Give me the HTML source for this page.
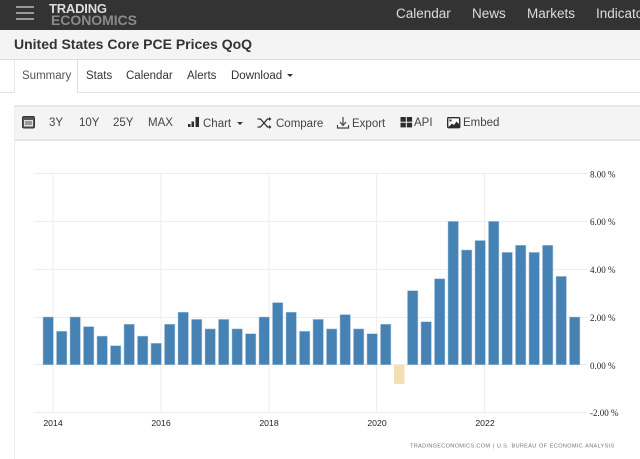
<!DOCTYPE html>
<html><head><meta charset="utf-8">
<style>
html,body{margin:0;padding:0;background:#fff}
body{width:640px;height:459px;overflow:hidden;position:relative;font-family:"Liberation Sans",sans-serif}
.a{position:absolute;white-space:nowrap}
svg{position:absolute;left:0;top:0}
</style></head><body>
<div class="a" style="left:0;top:0;width:640px;height:30px;background:#333"></div>
<div class="a" style="left:16px;top:6px;width:18px;height:1.500px;background:#999"></div>
<div class="a" style="left:16px;top:12px;width:18px;height:1.500px;background:#999"></div>
<div class="a" style="left:16px;top:18px;width:18px;height:1.500px;background:#999"></div>
<div class="a" style="left:49px;top:2px;font-size:13px;font-weight:bold;color:#ddd;line-height:14px;letter-spacing:-.2px">TRADING</div>
<div class="a" style="left:51px;top:13px;font-size:14px;font-weight:bold;color:#8a8a8a;line-height:14px;letter-spacing:-.05px">ECONOMICS</div>
<div class="a" style="left:396px;top:6px;font-size:13.500px;color:#ddd;line-height:16px">Calendar</div>
<div class="a" style="left:472px;top:6px;font-size:13.500px;color:#ddd;line-height:16px">News</div>
<div class="a" style="left:527px;top:6px;font-size:13.500px;color:#ddd;line-height:16px">Markets</div>
<div class="a" style="left:596px;top:6px;font-size:13.500px;color:#ddd;line-height:16px">Indicators</div>

<div class="a" style="left:0;top:30px;width:640px;height:29px;background:#f4f4f4;border-bottom:1px solid #ddd"></div>
<div class="a" style="left:14px;top:36px;font-size:14px;font-weight:bold;color:#333;line-height:17px">United States Core PCE Prices QoQ</div>

<div class="a" style="left:0;top:92px;width:640px;height:1px;background:#e2e2e2"></div>
<div class="a" style="left:14px;top:60px;width:62px;height:33px;background:#fff;border-left:1px solid #e6e6e6;border-right:1px solid #ddd"></div>
<div class="a" style="left:22px;top:69px;font-size:11.500px;color:#555;line-height:15px">Summary</div>
<div class="a" style="left:86px;top:69px;font-size:11.500px;color:#333;line-height:15px">Stats</div>
<div class="a" style="left:126px;top:69px;font-size:11.500px;color:#333;line-height:15px">Calendar</div>
<div class="a" style="left:187px;top:69px;font-size:11.500px;color:#333;line-height:15px">Alerts</div>
<div class="a" style="left:231px;top:69px;font-size:11.500px;color:#333;line-height:15px">Download</div>
<div class="a" style="left:287px;top:74px;width:0;height:0;border-left:3px solid transparent;border-right:3px solid transparent;border-top:3px solid #333"></div>

<div class="a" style="left:14px;top:105px;width:626px;background:#f4f4f4;border-top:2px solid #e6e6e6;border-bottom:2px solid #e6e6e6;box-sizing:border-box;height:36px"></div>
<div class="a" style="left:14px;top:105px;width:1px;height:354px;background:#eee"></div>

<div class="a" style="left:49px;top:116px;font-size:11.500px;color:#444;line-height:15px">3Y</div>
<div class="a" style="left:79px;top:116px;font-size:11.500px;color:#444;line-height:15px">10Y</div>
<div class="a" style="left:113px;top:116px;font-size:11.500px;color:#444;line-height:15px">25Y</div>
<div class="a" style="left:148px;top:116px;font-size:11.500px;color:#444;line-height:15px">MAX</div>
<div class="a" style="left:203px;top:117px;font-size:11.500px;color:#444;line-height:15px">Chart</div>
<div class="a" style="left:237px;top:122px;width:0;height:0;border-left:3.500px solid transparent;border-right:3.500px solid transparent;border-top:3.500px solid #333"></div>
<div class="a" style="left:276px;top:117px;font-size:11.500px;color:#444;line-height:15px">Compare</div>
<div class="a" style="left:352px;top:117px;font-size:11.500px;color:#444;line-height:15px">Export</div>
<div class="a" style="left:414px;top:116px;font-size:11.500px;color:#444;line-height:15px">API</div>
<div class="a" style="left:463px;top:116px;font-size:11.500px;color:#444;line-height:15px">Embed</div>

<svg width="640" height="459" viewBox="0 0 640 459">
<!-- toolbar icons -->
<rect x="22.500" y="116.500" width="12" height="11.500" rx="1.500" fill="#555" stroke="#333"/>
<rect x="24" y="120" width="9" height="6.500" fill="#ddd"/>
<path d="M25 122h7M25 124h7" stroke="#555"/>
<path d="M188 127v-3h2.500v3zM191.500 127v-5.500h2.500v5.500zM195.500 127v-10h3.500v10z" fill="#2c2c2c"/>
<path d="M257.500 119h3l7 8h2.500M257.500 127h3l7-8h2.500" fill="none" stroke="#333" stroke-width="1.300"/>
<path d="M269 117l2.500 2-2.500 2zM269 125l2.500 2-2.500 2z" fill="#333"/>
<path d="M343 117v8M340 122l3 3.500 3-3.500M337.500 125v3h11v-3" fill="none" stroke="#444" stroke-width="1.200"/>
<g fill="#2c2c2c"><rect x="400.500" y="117" width="5.300" height="4.700"/><rect x="406.800" y="117" width="5.300" height="4.700"/><rect x="400.500" y="122.700" width="5.300" height="4.700"/><rect x="406.800" y="122.700" width="5.300" height="4.700"/></g>
<rect x="447.700" y="117.700" width="12" height="10" rx="1" fill="#fff" stroke="#2c2c2c" stroke-width="1.400"/>
<path d="M448 127.500l4-4 2 1.500 2.500-3.500 3 3v3z" fill="#2c2c2c"/><rect x="449.500" y="119.500" width="2" height="2" fill="#2c2c2c"/>

<!-- grid -->
<g stroke="#eeeeee" stroke-width="1">
<path d="M34 173.500H587M34 221.500H587M34 269.500H587M34 317.500H587M34 364.500H587M34 412.500H587"/>
<path d="M53 173V413M161 173V413M269 173V413M376.500 173V413M484.500 173V413"/>
</g>
<g id="bars" fill="#4682b4" stroke="#a9c4dc" stroke-width=".5">
<rect x="43" y="317" width="10.400" height="47.800"/>
<rect x="56.500" y="331.300" width="10.400" height="33.500"/>
<rect x="70" y="317" width="10.400" height="47.800"/>
<rect x="83.500" y="326.600" width="10.400" height="38.200"/>
<rect x="97" y="336.100" width="10.400" height="28.700"/>
<rect x="110.500" y="345.700" width="10.400" height="19.100"/>
<rect x="124" y="324.200" width="10.400" height="40.600"/>
<rect x="137.500" y="336.100" width="10.400" height="28.700"/>
<rect x="151" y="343.300" width="10.400" height="21.500"/>
<rect x="164.500" y="324.200" width="10.400" height="40.600"/>
<rect x="178" y="312.200" width="10.400" height="52.600"/>
<rect x="191.500" y="319.400" width="10.400" height="45.400"/>
<rect x="205" y="328.900" width="10.400" height="35.900"/>
<rect x="218.500" y="319.400" width="10.400" height="45.400"/>
<rect x="232" y="328.900" width="10.400" height="35.900"/>
<rect x="245.500" y="333.700" width="10.400" height="31.100"/>
<rect x="259" y="317" width="10.400" height="47.800"/>
<rect x="272.500" y="302.600" width="10.400" height="62.200"/>
<rect x="286" y="312.200" width="10.400" height="52.600"/>
<rect x="299.500" y="331.300" width="10.400" height="33.500"/>
<rect x="313" y="319.400" width="10.400" height="45.400"/>
<rect x="326.500" y="328.900" width="10.400" height="35.900"/>
<rect x="340" y="314.600" width="10.400" height="50.200"/>
<rect x="353.500" y="328.900" width="10.400" height="35.900"/>
<rect x="367" y="333.700" width="10.400" height="31.100"/>
<rect x="380.500" y="324.200" width="10.400" height="40.600"/>
<rect x="394" y="364.800" width="10.400" height="19.100" fill="#f5deb3" stroke="none"/>
<rect x="407.500" y="290.700" width="10.400" height="74.100"/>
<rect x="421" y="321.800" width="10.400" height="43"/>
<rect x="434.500" y="278.800" width="10.400" height="86"/>
<rect x="448" y="221.400" width="10.400" height="143.400"/>
<rect x="461.500" y="250" width="10.400" height="114.800"/>
<rect x="475" y="240.500" width="10.400" height="124.300"/>
<rect x="488.500" y="221.400" width="10.400" height="143.400"/>
<rect x="502" y="252.400" width="10.400" height="112.400"/>
<rect x="515.500" y="245.300" width="10.400" height="119.500"/>
<rect x="529" y="252.400" width="10.400" height="112.400"/>
<rect x="542.500" y="245.300" width="10.400" height="119.500"/>
<rect x="556" y="276.400" width="10.400" height="88.400"/>
<rect x="569.500" y="317" width="10.400" height="47.800"/>
</g>
<g font-family="'Liberation Serif',serif" font-size="9" fill="#222" transform="translate(590,0)">
<text x="0" y="177.500">8.00 %</text><text x="0" y="225">6.00 %</text><text x="0" y="273">4.00 %</text><text x="0" y="321">2.00 %</text><text x="0" y="369">0.00 %</text><text x="0" y="416">-2.00 %</text>
</g>
<g font-family="'Liberation Sans',sans-serif" font-size="8.700" fill="#222" text-anchor="middle">
<text x="53" y="426">2014</text><text x="161" y="426">2016</text><text x="269" y="426">2018</text><text x="377" y="426">2020</text><text x="485" y="426">2022</text>
</g>
<text x="410" y="447.500" font-family="'Liberation Sans',sans-serif" font-size="5.600" fill="#777" letter-spacing=".3" word-spacing=".6">TRADINGECONOMICS.COM | U.S. BUREAU OF ECONOMIC ANALYSIS</text>
</svg>
</body></html>
